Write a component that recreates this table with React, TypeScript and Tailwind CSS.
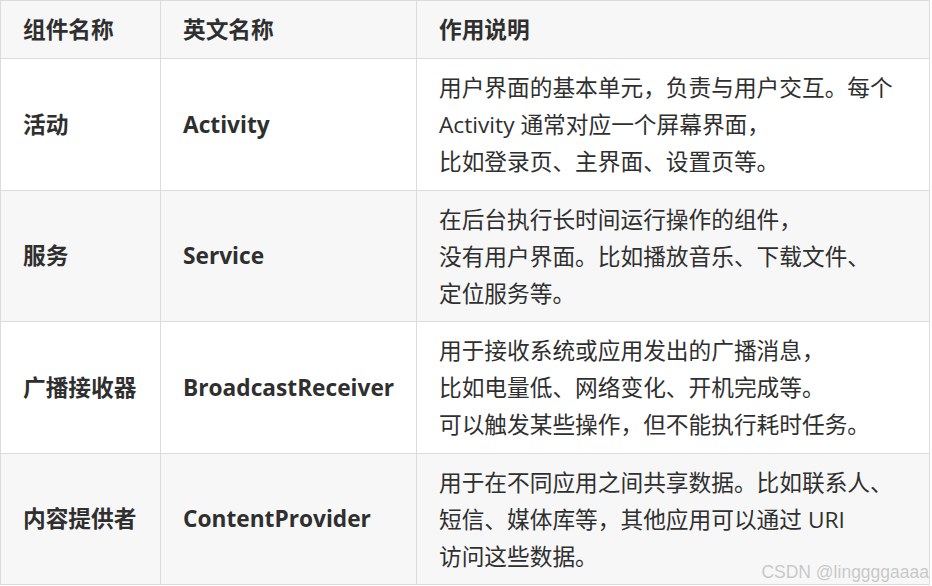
const rows = [
  {
    name: "活动",
    en: "Activity",
    desc: ["用户界面的基本单元，负责与用户交互。每个", "Activity 通常对应一个屏幕界面，", "比如登录页、主界面、设置页等。"],
  },
  {
    name: "服务",
    en: "Service",
    desc: ["在后台执行长时间运行操作的组件，", "没有用户界面。比如播放音乐、下载文件、", "定位服务等。"],
  },
  {
    name: "广播接收器",
    en: "BroadcastReceiver",
    desc: ["用于接收系统或应用发出的广播消息，", "比如电量低、网络变化、开机完成等。", "可以触发某些操作，但不能执行耗时任务。"],
  },
  {
    name: "内容提供者",
    en: "ContentProvider",
    desc: ["用于在不同应用之间共享数据。比如联系人、", "短信、媒体库等，其他应用可以通过 URI", "访问这些数据。"],
  },
];

export default function App() {
  return (
    <div
      className="relative w-[932px] h-[586px] bg-white text-[#2f2f2f] text-[22.7px] leading-[37px]"
      style={{ fontFamily: '"Open Sans", "Noto Sans CJK SC", sans-serif' }}
    >
      <table className="border-collapse table-fixed w-[929px]">
        <colgroup>
          <col className="w-[160px]" />
          <col className="w-[256px]" />
          <col className="w-[513px]" />
        </colgroup>
        <thead>
          <tr className="bg-[#f7f7f7]">
            <th className="border border-[#dcdcdc] px-[22px] pt-[10px] pb-[10px] text-left font-bold">组件名称</th>
            <th className="border border-[#dcdcdc] px-[22px] pt-[10px] pb-[10px] text-left font-bold">英文名称</th>
            <th className="border border-[#dcdcdc] px-[22px] pt-[10px] pb-[10px] text-left font-bold">作用说明</th>
          </tr>
        </thead>
        <tbody>
          {rows.map((r, i) => (
            <tr key={r.en} className={i % 2 === 1 ? "bg-[#f7f7f7]" : "bg-white"}>
              <td className="border border-[#dcdcdc] px-[22px] align-middle font-bold">{r.name}</td>
              <td className="border border-[#dcdcdc] px-[22px] align-middle font-bold">{r.en}</td>
              <td className="border border-[#dcdcdc] px-[22px] pt-[10px] pb-[9.5px] align-top whitespace-nowrap">
                {r.desc.map((line) => (
                  <div key={line}>{line}</div>
                ))}
              </td>
            </tr>
          ))}
        </tbody>
      </table>
      <div
        className="absolute right-[3px] bottom-[5px] text-[17.5px] leading-none text-[#c8c8c8]"
        style={{ fontFamily: '"Liberation Sans", sans-serif', textShadow: "0 0 1px #fff" }}
      >
        CSDN @linggggaaaa
      </div>
    </div>
  );
}
